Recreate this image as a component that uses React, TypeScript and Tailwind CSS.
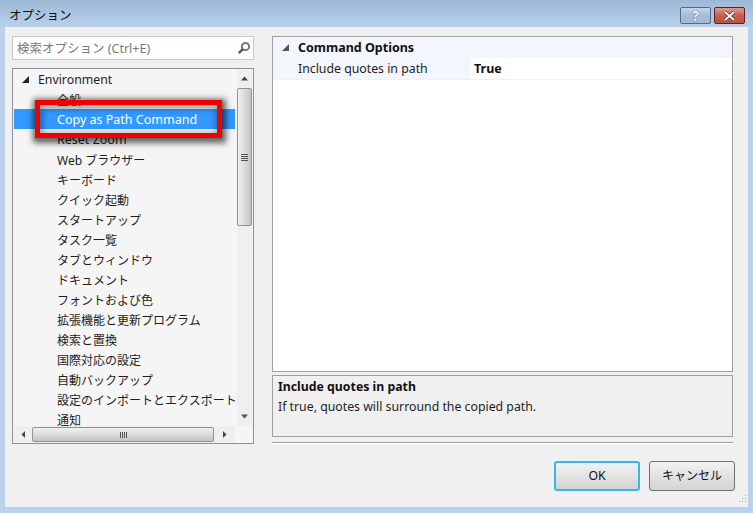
import React from "react";

const items = ["全般","Copy as Path Command","Reset Zoom","Web ブラウザー","キーボード","クイック起動","スタートアップ","タスク一覧","タブとウィンドウ","ドキュメント","フォントおよび色","拡張機能と更新プログラム","検索と置換","国際対応の設定","自動バックアップ","設定のインポートとエクスポート","通知"];

const Tri = ({ d, cls }: { d: string; cls: string }) => (
  <svg width="7" height="7" viewBox="0 0 7 7" className={cls}><path d={d} fill="currentColor" /></svg>
);

export default function App() {
  return (
    <div className="relative w-[753px] h-[513px] overflow-hidden flex flex-col bg-[#b9d1ea] text-[12.3px] text-[#1e1e1e] font-['Noto_Sans','Noto_Sans_CJK_JP',sans-serif]">
      <div className="h-[27px] shrink-0 flex items-start justify-between pl-[9px] pr-[8px] bg-gradient-to-b from-[#9cb9d7] to-[#b9d1ea]">
        <span className="mt-[6px] text-[12.5px] leading-[20px] text-[#111]">オプション</span>
        <div className="flex mt-[7px] gap-[3px]">
          <div className="w-[31px] h-[17px] rounded-[2px] border border-[#4f6b88] bg-gradient-to-b from-[#c4d5e8] via-[#a5bdd8] to-[#9fb9d6] flex items-center justify-center text-[14px] font-bold leading-none text-[#f4f4f4] [text-shadow:0_0_1px_#222]">?</div>
          <div className="w-[31px] h-[17px] rounded-[2px] border border-[#5a1f2c] bg-gradient-to-b from-[#d99c92] via-[#c8604f] to-[#c0503e] flex items-center justify-center">
            <svg width="13" height="10" viewBox="0 0 13 10"><path d="M2 1 L11 9 M11 1 L2 9" stroke="#3a2a2a" strokeWidth="3.4" /><path d="M2 1 L11 9 M11 1 L2 9" stroke="#f3eeee" strokeWidth="2.2" /></svg>
          </div>
        </div>
      </div>

      <div className="relative mx-[5px] h-[480px] shrink-0 bg-[#f0f0f0] pl-[7px] pt-[9px]">
        <div className="flex gap-[18px] items-start">
          <div className="w-[242px] flex flex-col gap-[8px]">
            <div className="h-[24px] border border-[#c4c9d2] bg-white flex items-center justify-between pl-[4px] pr-[2px] text-[12.5px] text-[#7a7a7a] leading-none">
              <span className="pt-[3px]">検索オプション (Ctrl+E)</span>
              <svg width="14" height="14" viewBox="0 0 14 14"><circle cx="8.5" cy="5.5" r="3.6" fill="none" stroke="#6f7b82" strokeWidth="2" /><path d="M6 8 L1.8 12.2" stroke="#5b5b5b" strokeWidth="2.6" /></svg>
            </div>
            <div className="h-[376px] border border-[#8d9299] bg-[#f5f5f5] flex flex-col">
              <div className="flex h-[357px]">
                <div className="w-[224px] overflow-hidden">
                  <div className="h-[20px] flex items-center leading-none">
                    <Tri d="M7 0 V7 H0 Z" cls="ml-[9px] mr-[9px] text-[#222]" />
                    <span className="pt-[2px]">Environment</span>
                  </div>
                  {items.map((t, i) => (
                    <div key={t} className={`h-[20px] w-[221px] ml-px pl-[43px] flex items-center whitespace-nowrap leading-none ${i === 1 || i === 2 ? "pt-[2px] text-[12.5px]" : "pt-[3px] text-[12px]"} ${i === 1 ? "bg-[#3399ff] text-white" : ""}`}>{t}</div>
                  ))}
                </div>
                <div className="w-[15px] flex flex-col items-center bg-[#efefef]">
                  <div className="h-[19px] flex items-center justify-center"><Tri d="M3.5 1.5 L7 5.5 H0 Z" cls="text-[#444]" /></div>
                  <div className="w-[15px] h-[138px] rounded-[2px] border border-[#8e9399] bg-gradient-to-r from-[#f0f0f0] via-[#dcdcdc] to-[#c4c4c4] flex flex-col items-center justify-center gap-[1px]">
                    <i className="block w-[7px] h-px bg-[#555]" /><i className="block w-[7px] h-px bg-[#555]" /><i className="block w-[7px] h-px bg-[#555]" /><i className="block w-[7px] h-px bg-[#555]" />
                  </div>
                  <div className="flex-1" />
                  <div className="h-[19px] flex items-center justify-center"><Tri d="M0 1.5 H7 L3.5 5.5 Z" cls="text-[#555]" /></div>
                </div>
              </div>
              <div className="h-[17px] flex items-center ml-px w-[221px] bg-[#efefef]">
                <div className="w-[18px] flex justify-center"><Tri d="M5 0 V7 L1.5 3.5 Z" cls="text-[#444]" /></div>
                <div className="w-[182px] h-[15px] rounded-[2px] border border-[#8e9399] bg-gradient-to-b from-[#f0f0f0] via-[#dcdcdc] to-[#c4c4c4] flex items-center justify-center gap-[1px]">
                  <i className="block h-[6px] w-px bg-[#555]" /><i className="block h-[6px] w-px bg-[#555]" /><i className="block h-[6px] w-px bg-[#555]" /><i className="block h-[6px] w-px bg-[#555]" />
                </div>
                <div className="flex-1 flex justify-center"><Tri d="M2 0 V7 L5.5 3.5 Z" cls="text-[#444]" /></div>
              </div>
            </div>
          </div>

          <div className="w-[461px] flex flex-col">
            <div className="h-[336px] border border-[#a0a0a0] bg-white">
              <div className="h-[21px] bg-[#f3f6fc] flex items-center font-bold text-[12.5px] text-[#111] leading-none">
                <Tri d="M7 0 V7 H0 Z" cls="ml-[9px] mr-[9px] text-[#555]" />
                <span className="pt-[2px]">Command Options</span>
              </div>
              <div className="h-[22px] flex border-b border-[#f0f0f0] leading-none">
                <div className="w-[197px] pl-[25px] pt-[2px] bg-[#f3f6fc] flex items-center">Include quotes in path</div>
                <div className="pl-[4px] pt-[2px] flex items-center font-bold text-[12.5px] text-[#111]">True</div>
              </div>
            </div>
            <div className="mt-[3px] h-[62px] border border-[#a0a0a0] bg-[#f0f0f0] pl-[5px] pt-px leading-[20px]">
              <div className="font-bold text-[#111]">Include quotes in path</div>
              <div>If true, quotes will surround the copied path.</div>
            </div>
            <div className="mt-[5px] h-[2px] border-t border-[#a0a0a0] bg-white" />
          </div>
        </div>

        <div className="flex justify-end gap-[9px] mt-[17px] pr-[13px]">
          <button className="w-[86px] h-[30px] rounded-[3px] border-2 border-[#36b7e6] bg-gradient-to-b from-[#f2f2f2] to-[#d3d3d3] text-[#111] leading-none">OK</button>
          <button className="w-[86px] h-[30px] rounded-[3px] border border-[#707070] bg-gradient-to-b from-[#f2f2f2] to-[#d3d3d3] text-[12px] text-[#111] leading-none">キャンセル</button>
        </div>

        <svg width="10" height="10" viewBox="0 0 10 10" className="absolute right-[1px] bottom-[3px]">
          <path d="M8 1h1v1H8zM5 4h1v1H5zM8 4h1v1H8zM2 7h1v1H2zM5 7h1v1H5zM8 7h1v1H8z" fill="#a5a5a5" />
        </svg>
      </div>

      <div className="absolute left-[35px] top-[100px] w-[187px] h-[38px] border-[5px] border-[#f00000] shadow-[1px_2px_6px_3px_rgba(0,0,0,0.6),inset_1px_2px_6px_2px_rgba(0,0,0,0.35)]" />
    </div>
  );
}
